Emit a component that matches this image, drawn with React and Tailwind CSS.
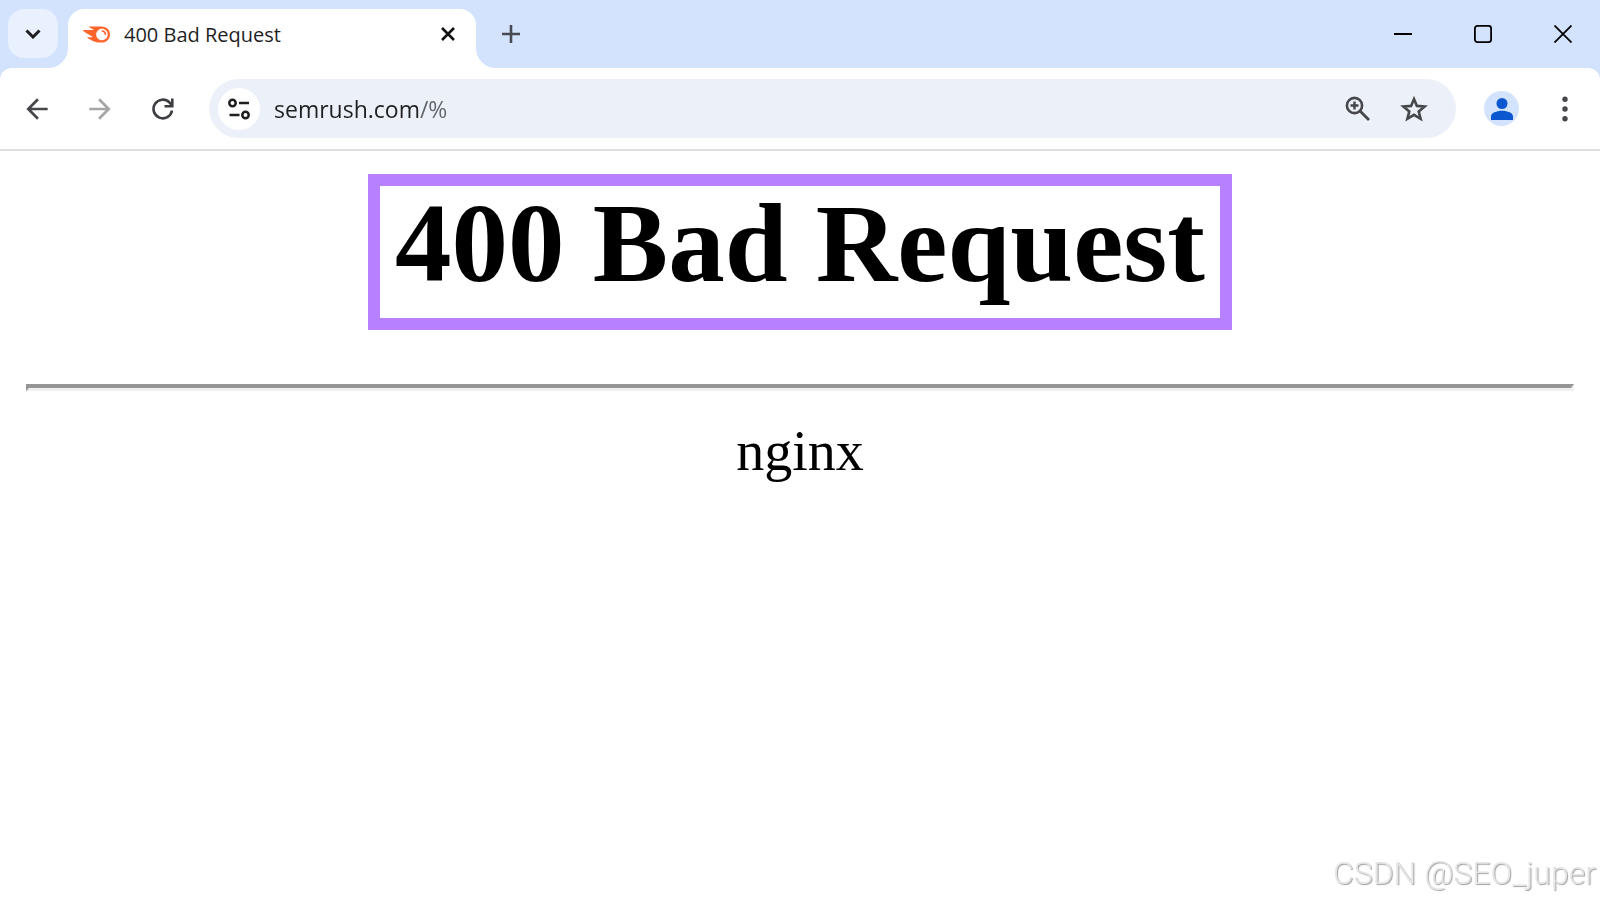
import React, { useState } from 'react';
import { SiSemrush } from 'react-icons/si';
import { MdArrowBack, MdArrowForward } from 'react-icons/md';

const IconButton = ({ label, className = '', children }) => (
  <button type="button" aria-label={label} className={`flex items-center justify-center shrink-0 ${className}`}>
    {children}
  </button>
);

const TabStrip = () => (
  <div className="flex h-[68px] bg-[#d3e3fd]">
    {/* white behind the rounded blue cells gives the tab its flared feet */}
    <div className="bg-white">
      <div className="h-full w-[68px] rounded-br-[20px] bg-[#d3e3fd] pl-2 pt-[9px]">
        <IconButton label="Search tabs" className="h-[49px] w-[50px] rounded-2xl bg-[#e9f1fe]">
          <svg width="16" height="10" viewBox="0 0 16 10" fill="none" stroke="#1f1f1f" strokeWidth="3">
            <path d="M1.5 1.5 8 8l6.500-6.500" />
          </svg>
        </IconButton>
      </div>
    </div>

    <div className="w-[408px] pt-[9px]">
      <div className="flex h-full items-start rounded-t-2xl bg-white pl-[15px] pr-4">
        <div className="flex h-[50px] w-full items-center">
          <SiSemrush className="size-[27px] shrink-0 text-[#ff642d]" />
          <span className="ml-[14px] flex-1 whitespace-nowrap pt-px text-[20px] text-[#1f1f1f]">400 Bad Request</span>
          <IconButton label="Close tab" className="size-6">
            <svg width="14" height="14" viewBox="0 0 14 14" stroke="#111" strokeWidth="2.600">
              <path d="M1 1l12 12M13 1 1 13" />
            </svg>
          </IconButton>
        </div>
      </div>
    </div>

    <div className="flex-1 bg-white">
      <div className="flex h-full items-center justify-between rounded-bl-[20px] bg-[#d3e3fd] pl-[15px]">
        <IconButton label="New tab" className="size-10">
          <svg width="18" height="18" viewBox="0 0 18 18" stroke="#474a50" strokeWidth="2.600">
            <path d="M9 0v18M0 9h18" />
          </svg>
        </IconButton>
        <div className="flex gap-[6px]">
          <IconButton label="Minimize" className="h-12 w-[74px]">
            <svg width="18" height="18" viewBox="0 0 18 18" stroke="#000" strokeWidth="2">
              <path d="M0 9h18" />
            </svg>
          </IconButton>
          <IconButton label="Maximize" className="h-12 w-[74px]">
            <svg width="18" height="18" viewBox="0 0 18 18" fill="none" stroke="#000" strokeWidth="1.800">
              <rect x="0.900" y="0.900" width="16.200" height="16.200" rx="2.500" />
            </svg>
          </IconButton>
          <IconButton label="Close" className="h-12 w-[74px]">
            <svg width="18" height="18" viewBox="0 0 18 18" stroke="#000" strokeWidth="1.800">
              <path d="M0.500 0.500l17 17M17.500 0.500l-17 17" />
            </svg>
          </IconButton>
        </div>
      </div>
    </div>
  </div>
);

const AddressBar = () => {
  const [url, setUrl] = useState('semrush.com/%');

  return (
    <form
      onSubmit={(e) => e.preventDefault()}
      className="ml-[21px] flex h-[59px] flex-1 items-center rounded-full bg-[#ecf1f9] pl-[9px] pr-[22px]"
    >
      <IconButton label="View site information" className="size-[42px] rounded-full bg-white">
        <svg width="22" height="22" viewBox="0 0 22 22" fill="none" stroke="#1f1f1f" strokeWidth="2.500">
          <circle cx="4.500" cy="5" r="3.200" />
          <path d="M11 5h10M1.500 17h10" />
          <circle cx="17.500" cy="17" r="3.200" />
        </svg>
      </IconButton>
      {/* the path after the host is drawn in grey */}
      <input
        type="text"
        aria-label="Address"
        value={url}
        onChange={(e) => setUrl(e.target.value)}
        className="ml-[14px] min-w-0 flex-1 bg-[linear-gradient(90deg,#1f1f1f_145px,#5f6368_145px)] bg-clip-text text-[23px] leading-8 text-transparent caret-black outline-none"
      />
      <div className="flex gap-4">
        <IconButton label="Zoom" className="size-10">
          <svg width="26" height="26" viewBox="0 0 26 26" fill="none" stroke="#45474a" strokeWidth="2.600">
            <circle cx="9.500" cy="9.500" r="7.600" />
            <path d="M15 15l9 9" strokeWidth="2.800" />
            <path d="M9.500 5.500v8M5.500 9.500h8" strokeWidth="2.400" />
          </svg>
        </IconButton>
        <IconButton label="Bookmark this tab" className="size-10">
          <svg width="28" height="28" viewBox="0 0 28 28" fill="none" stroke="#45474a" strokeWidth="2.600">
            <path d="M14 4l2.900 6.900 7.700.6-5.900 4.900 1.900 7.400-6.600-4-6.600 4 1.900-7.400-5.900-4.900 7.700-.6z" />
          </svg>
        </IconButton>
      </div>
    </form>
  );
};

const Toolbar = () => (
  <div className="bg-[#d3e3fd]">
    <div className="flex h-[83px] items-center rounded-t-xl border-b-2 border-[#e0e0e0] bg-white pl-3 pr-[17px]">
      <div className="flex gap-[13px]">
        <IconButton label="Back" className="size-[50px] text-[#45474a]">
          <MdArrowBack className="size-8" />
        </IconButton>
        <IconButton label="Forward" className="size-[50px] text-[#a6a6a6]">
          <MdArrowForward className="size-8" />
        </IconButton>
        <IconButton label="Reload" className="size-[50px]">
          <svg width="22" height="22" viewBox="0 0 22 22" fill="none" stroke="#3c3e41" strokeWidth="2.600">
            <path d="M20 12.500A9.300 9.300 0 1 1 17.500 4.500L20 7.500" />
            <path d="M20.300 0.500v7.700h-7.800" />
          </svg>
        </IconButton>
      </div>
      <AddressBar />
      <IconButton label="Profile" className="ml-7 size-[35px] rounded-full bg-[#d3e3fd]">
        <svg width="22" height="22" viewBox="0 0 22 22" fill="#0b57d0">
          <circle cx="11" cy="5.500" r="5.500" />
          <path d="M0 22v-3.500C0 15 5.500 12.800 11 12.800S22 15 22 18.500V22z" />
        </svg>
      </IconButton>
      <IconButton label="Menu" className="ml-7 h-10 w-9">
        <svg width="6" height="26" viewBox="0 0 6 26" fill="#45474a">
          <circle cx="3" cy="3.200" r="2.700" />
          <circle cx="3" cy="13" r="2.700" />
          <circle cx="3" cy="22.800" r="2.700" />
        </svg>
      </IconButton>
    </div>
  </div>
);

const ErrorPage = () => (
  <main className="px-[26px] pt-[23px] text-center font-['Liberation_Serif',serif] text-black">
    <h1 className="inline-block whitespace-nowrap border-[12px] border-[#b780ff] px-[15px] pb-[18px] align-top text-[113px] font-bold leading-[114px]">
      400 Bad Request
    </h1>
    <hr className="mt-[54px] h-[7px] border-x-[3px] border-b-[3px] border-t-4 border-b-[#f0f0f0] border-l-[#959595] border-r-[#f0f0f0] border-t-[#959595]" />
    <p className="mt-7 text-[56px] leading-[64px]">nginx</p>
  </main>
);

const App = () => (
  <div className="min-h-screen bg-white font-['Open_Sans',sans-serif]">
    <TabStrip />
    <Toolbar />
    <ErrorPage />
    <div className="fixed bottom-[9px] right-1 whitespace-nowrap font-['Roboto',sans-serif] text-[32px] font-light leading-9 text-[#e6e6e6] [text-shadow:1px_1px_1px_#a0a0a0]">
      CSDN @SEO_juper
    </div>
  </div>
);

export default App;
